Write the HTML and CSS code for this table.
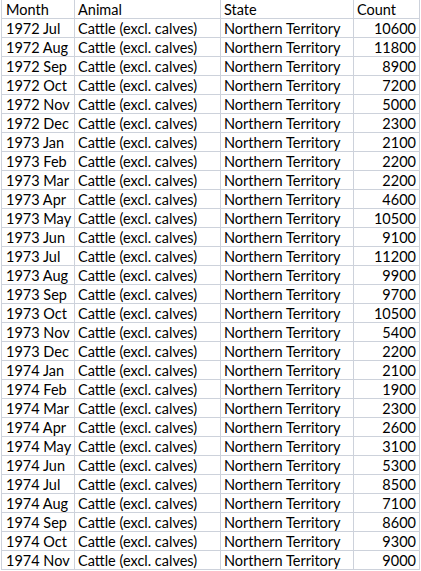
FILE: index.html
```html
<!DOCTYPE html>
<html>
<head>
<meta charset="utf-8">
<link rel="stylesheet" href="styles.css">
</head>
<body>
<div class="sheet">
  <div class="row"><div class="c c1">Month</div><div class="c c2">Animal</div><div class="c c3">State</div><div class="c c4 h">Count</div></div>
  <div class="row"><div class="c c1">1972 Jul</div><div class="c c2">Cattle (excl. calves)</div><div class="c c3">Northern Territory</div><div class="c c4">10600</div></div>
  <div class="row"><div class="c c1">1972 Aug</div><div class="c c2">Cattle (excl. calves)</div><div class="c c3">Northern Territory</div><div class="c c4">11800</div></div>
  <div class="row"><div class="c c1">1972 Sep</div><div class="c c2">Cattle (excl. calves)</div><div class="c c3">Northern Territory</div><div class="c c4">8900</div></div>
  <div class="row"><div class="c c1">1972 Oct</div><div class="c c2">Cattle (excl. calves)</div><div class="c c3">Northern Territory</div><div class="c c4">7200</div></div>
  <div class="row"><div class="c c1">1972 Nov</div><div class="c c2">Cattle (excl. calves)</div><div class="c c3">Northern Territory</div><div class="c c4">5000</div></div>
  <div class="row"><div class="c c1">1972 Dec</div><div class="c c2">Cattle (excl. calves)</div><div class="c c3">Northern Territory</div><div class="c c4">2300</div></div>
  <div class="row"><div class="c c1">1973 Jan</div><div class="c c2">Cattle (excl. calves)</div><div class="c c3">Northern Territory</div><div class="c c4">2100</div></div>
  <div class="row"><div class="c c1">1973 Feb</div><div class="c c2">Cattle (excl. calves)</div><div class="c c3">Northern Territory</div><div class="c c4">2200</div></div>
  <div class="row"><div class="c c1">1973 Mar</div><div class="c c2">Cattle (excl. calves)</div><div class="c c3">Northern Territory</div><div class="c c4">2200</div></div>
  <div class="row"><div class="c c1">1973 Apr</div><div class="c c2">Cattle (excl. calves)</div><div class="c c3">Northern Territory</div><div class="c c4">4600</div></div>
  <div class="row"><div class="c c1">1973 May</div><div class="c c2">Cattle (excl. calves)</div><div class="c c3">Northern Territory</div><div class="c c4">10500</div></div>
  <div class="row"><div class="c c1">1973 Jun</div><div class="c c2">Cattle (excl. calves)</div><div class="c c3">Northern Territory</div><div class="c c4">9100</div></div>
  <div class="row"><div class="c c1">1973 Jul</div><div class="c c2">Cattle (excl. calves)</div><div class="c c3">Northern Territory</div><div class="c c4">11200</div></div>
  <div class="row"><div class="c c1">1973 Aug</div><div class="c c2">Cattle (excl. calves)</div><div class="c c3">Northern Territory</div><div class="c c4">9900</div></div>
  <div class="row"><div class="c c1">1973 Sep</div><div class="c c2">Cattle (excl. calves)</div><div class="c c3">Northern Territory</div><div class="c c4">9700</div></div>
  <div class="row"><div class="c c1">1973 Oct</div><div class="c c2">Cattle (excl. calves)</div><div class="c c3">Northern Territory</div><div class="c c4">10500</div></div>
  <div class="row"><div class="c c1">1973 Nov</div><div class="c c2">Cattle (excl. calves)</div><div class="c c3">Northern Territory</div><div class="c c4">5400</div></div>
  <div class="row"><div class="c c1">1973 Dec</div><div class="c c2">Cattle (excl. calves)</div><div class="c c3">Northern Territory</div><div class="c c4">2200</div></div>
  <div class="row"><div class="c c1">1974 Jan</div><div class="c c2">Cattle (excl. calves)</div><div class="c c3">Northern Territory</div><div class="c c4">2100</div></div>
  <div class="row"><div class="c c1">1974 Feb</div><div class="c c2">Cattle (excl. calves)</div><div class="c c3">Northern Territory</div><div class="c c4">1900</div></div>
  <div class="row"><div class="c c1">1974 Mar</div><div class="c c2">Cattle (excl. calves)</div><div class="c c3">Northern Territory</div><div class="c c4">2300</div></div>
  <div class="row"><div class="c c1">1974 Apr</div><div class="c c2">Cattle (excl. calves)</div><div class="c c3">Northern Territory</div><div class="c c4">2600</div></div>
  <div class="row"><div class="c c1">1974 May</div><div class="c c2">Cattle (excl. calves)</div><div class="c c3">Northern Territory</div><div class="c c4">3100</div></div>
  <div class="row"><div class="c c1">1974 Jun</div><div class="c c2">Cattle (excl. calves)</div><div class="c c3">Northern Territory</div><div class="c c4">5300</div></div>
  <div class="row"><div class="c c1">1974 Jul</div><div class="c c2">Cattle (excl. calves)</div><div class="c c3">Northern Territory</div><div class="c c4">8500</div></div>
  <div class="row"><div class="c c1">1974 Aug</div><div class="c c2">Cattle (excl. calves)</div><div class="c c3">Northern Territory</div><div class="c c4">7100</div></div>
  <div class="row"><div class="c c1">1974 Sep</div><div class="c c2">Cattle (excl. calves)</div><div class="c c3">Northern Territory</div><div class="c c4">8600</div></div>
  <div class="row"><div class="c c1">1974 Oct</div><div class="c c2">Cattle (excl. calves)</div><div class="c c3">Northern Territory</div><div class="c c4">9300</div></div>
  <div class="row"><div class="c c1">1974 Nov</div><div class="c c2">Cattle (excl. calves)</div><div class="c c3">Northern Territory</div><div class="c c4">9000</div></div>
</div>
</body>
</html>
```
FILE: styles.css
```css
html, body { margin: 0; padding: 0; background: #fff; }
.sheet {
  margin-left: 1px;
  font-family: Lato, "Open Sans", sans-serif;
  font-size: 14.5px;
  color: #000;
}
.row {
  display: flex;
  border-left: 1px solid #cdd2db;
}
.c {
  box-sizing: border-box;
  height: 19px;
  border-right: 1px solid #cdd2db;
  border-bottom: 1px solid #cdd2db;
  padding: 1px 3px 0;
  line-height: 17px;
  white-space: nowrap;
  overflow: hidden;
}
.c1 { width: 73px; padding-left: 4px; }
.c2 { width: 146px; }
.c3 { width: 133px; }
.c4 { width: 66px; text-align: right; }
.c4.h { text-align: left; }
```
